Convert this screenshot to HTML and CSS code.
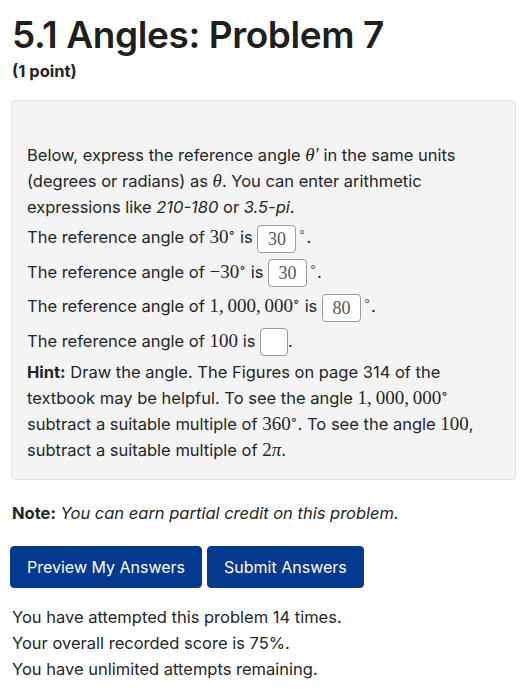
FILE: index.html
```html
<!DOCTYPE html>
<html lang="en">
<head>
<meta charset="utf-8">
<link rel="stylesheet" href="styles.css">
</head>
<body>
<div class="page">
  <h1 class="title">5.1 Angles: Problem 7</h1>
  <div class="points">(1 point)</div>
  <div class="problem">
    <p class="intro">Below, express the reference angle <span class="mi">θ′</span> in the same units (degrees or radians) as <span class="mi">θ</span>. You can enter arithmetic expressions like <i>210-180</i> or <i>3.5-pi</i>.</p>
    <div class="qrow">The reference angle of <span class="mn">30<sup>∘</sup></span> is <span class="answer">30</span><span class="deg">∘</span>.</div>
    <div class="qrow">The reference angle of <span class="mn">−30<sup>∘</sup></span> is <span class="answer">30</span><span class="deg">∘</span>.</div>
    <div class="qrow">The reference angle of <span class="mn">1,&#8201;000,&#8201;000<sup>∘</sup></span> is <span class="answer">80</span><span class="deg">∘</span>.</div>
    <div class="qrow">The reference angle of <span class="mn">100</span> is <span class="answer empty"></span>.</div>
    <p class="hint"><b>Hint:</b> Draw the angle. The Figures on page 314 of the textbook may be helpful. To see the angle <span class="mn">1,&#8201;000,&#8201;000<sup>∘</sup></span> subtract a suitable multiple of <span class="mn">360<sup>∘</sup></span>. To see the angle <span class="mn">100</span>, subtract a suitable multiple of <span class="mn">2<span class="mi">π</span></span>.</p>
  </div>
  <p class="note"><b>Note:</b> <i>You can earn partial credit on this problem.</i></p>
  <div class="buttons">
    <button class="btn">Preview My Answers</button>
    <button class="btn">Submit Answers</button>
  </div>
  <div class="attempts">
    <div>You have attempted this problem 14 times.</div>
    <div>Your overall recorded score is 75%.</div>
    <div>You have unlimited attempts remaining.</div>
  </div>
</div>
</body>
</html>
```

FILE: styles.css
```css
html, body {
  margin: 0;
  padding: 0;
  background: #ffffff;
}

body {
  font-family: Inter, "Noto Sans", "Liberation Sans", sans-serif;
  font-size: 16.5px;
  line-height: 26px;
  color: #232629;
}

.page {
  padding: 0 12px 0 11px;
}

.title {
  margin: 0;
  padding-top: 12px;
  padding-left: 1px;
  font-size: 37px;
  line-height: 46px;
  font-weight: 600;
  letter-spacing: -0.4px;
  color: #1f1f1f;
}

.points {
  font-weight: 700;
  line-height: 26px;
  padding-left: 1px;
}

.problem {
  margin-top: 16px;
  background: #f4f4f4;
  border: 1px solid #e2e2e2;
  border-radius: 4px;
  padding: 41px 14px 16px 15px;
}

.problem p {
  margin: 0;
}

.mi {
  font-family: "Liberation Serif", "DejaVu Serif", serif;
  font-style: italic;
  font-size: 19px;
}

.mn {
  font-family: "Liberation Serif", "DejaVu Serif", serif;
  font-size: 19px;
}

.mn sup {
  font-size: 14px;
  line-height: 1;
  vertical-align: 6px;
}

.qrow {
  height: 34.67px;
  line-height: 34.67px;
  white-space: nowrap;
}

.answer {
  display: inline-block;
  box-sizing: border-box;
  vertical-align: middle;
  min-width: 39px;
  height: 28px;
  border: 1px solid #9a9a9a;
  border-radius: 4px;
  background: #ffffff;
  font-family: "Liberation Serif", "DejaVu Serif", serif;
  font-size: 18px;
  line-height: 26px;
  padding: 0 8px;
  color: #555;
  text-align: center;
}

.answer.empty {
  min-width: 28px;
  width: 28px;
  padding: 0;
}

.deg {
  font-family: "Liberation Serif", serif;
  font-size: 13px;
  line-height: 1;
  vertical-align: 8px;
  margin-left: 2px;
  color: #666;
}

.note {
  margin: 20px 0 0;
  padding-left: 1px;
}

.buttons {
  display: flex;
  gap: 5px;
  margin-top: 20px;
  margin-left: -1px;
}

.btn {
  font-family: Inter, "Noto Sans", "Liberation Sans", sans-serif;
  font-size: 16px;
  height: 42px;
  padding: 0 16px;
  background: #033a8f;
  color: #ffffff;
  border: 1px solid #033a8f;
  border-radius: 4px;
}

.attempts {
  margin-top: 16px;
  padding-left: 1px;
}
```
